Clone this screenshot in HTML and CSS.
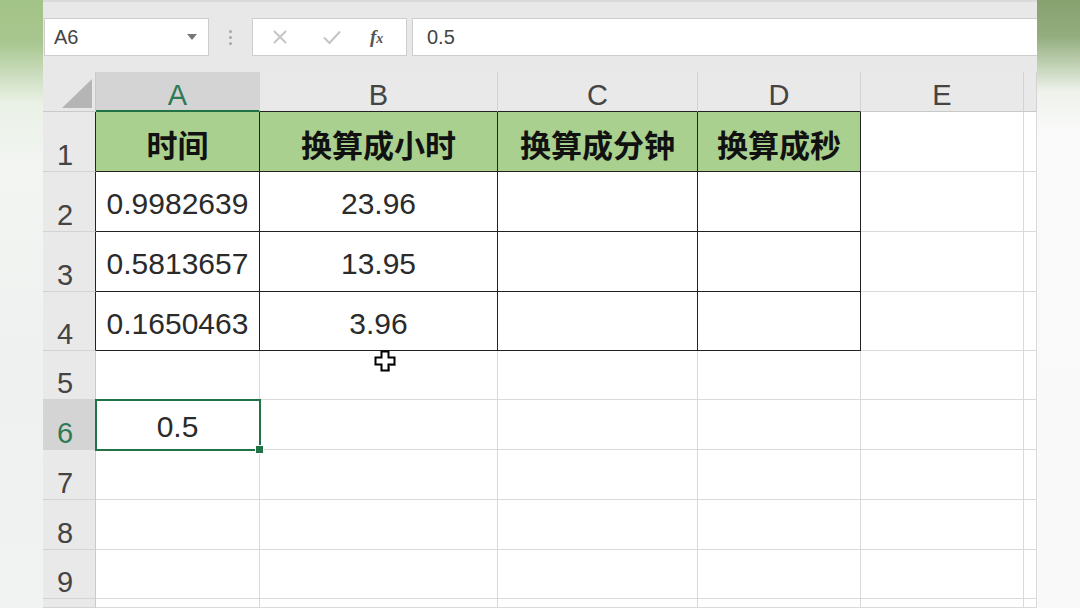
FILE: index.html
```html
<!DOCTYPE html>
<html lang="zh-CN">
<head>
    <meta charset="UTF-8">
    <meta name="viewport" content="width=device-width, initial-scale=1.0">
    <title>时间换算</title>
    <link rel="stylesheet" href="styles.css">
</head>
<body>
    <div class="frame">
        <div class="side side-left"></div>

        <div class="app">
            <div class="formula-bar">
                <div class="name-box">
                    <span>A6</span>
                    <span class="caret"></span>
                </div>
                <div class="grip">
                    <span></span><span></span><span></span>
                </div>
                <div class="fx-buttons">
                    <svg class="icon" width="16" height="16" viewBox="0 0 16 16">
                        <path d="M2 2 L14 14 M14 2 L2 14" stroke="#c4c4c4" stroke-width="1.8" fill="none"/>
                    </svg>
                    <svg class="icon" width="20" height="16" viewBox="0 0 20 16">
                        <path d="M2 8.5 L7.5 14 L18 2.5" stroke="#c4c4c4" stroke-width="2" fill="none"/>
                    </svg>
                    <span class="fx"><i>f</i><i class="x">x</i></span>
                </div>
                <div class="formula-input">0.5</div>
            </div>

            <div class="sheet">
                <!-- column headers -->
                <div class="corner">
                    <svg width="30" height="29" viewBox="0 0 30 29">
                        <polygon points="0,29 30,29 30,0" fill="#b5b5b5"/>
                    </svg>
                </div>
                <div class="col-head active">A</div>
                <div class="col-head dark">B</div>
                <div class="col-head dark">C</div>
                <div class="col-head dark">D</div>
                <div class="col-head">E</div>
                <div class="col-head"></div>

                <!-- row 1 -->
                <div class="row-head boxed">1</div>
                <div class="cell title boxed">时间</div>
                <div class="cell title boxed">换算成小时</div>
                <div class="cell title boxed">换算成分钟</div>
                <div class="cell title boxed">换算成秒</div>
                <div class="cell"></div>
                <div class="cell"></div>

                <!-- row 2 -->
                <div class="row-head boxed">2</div>
                <div class="cell num boxed">0.9982639</div>
                <div class="cell num boxed">23.96</div>
                <div class="cell boxed"></div>
                <div class="cell boxed"></div>
                <div class="cell"></div>
                <div class="cell"></div>

                <!-- row 3 -->
                <div class="row-head boxed">3</div>
                <div class="cell num boxed">0.5813657</div>
                <div class="cell num boxed">13.95</div>
                <div class="cell boxed"></div>
                <div class="cell boxed"></div>
                <div class="cell"></div>
                <div class="cell"></div>

                <!-- row 4 -->
                <div class="row-head boxed">4</div>
                <div class="cell num boxed">0.1650463</div>
                <div class="cell num boxed">3.96</div>
                <div class="cell boxed"></div>
                <div class="cell boxed"></div>
                <div class="cell"></div>
                <div class="cell"></div>

                <!-- row 5 -->
                <div class="row-head">5</div>
                <div class="cell"></div>
                <div class="cell"></div>
                <div class="cell"></div>
                <div class="cell"></div>
                <div class="cell"></div>
                <div class="cell"></div>

                <!-- row 6 -->
                <div class="row-head active">6</div>
                <div class="cell num selected">0.5</div>
                <div class="cell"></div>
                <div class="cell"></div>
                <div class="cell"></div>
                <div class="cell"></div>
                <div class="cell"></div>

                <!-- row 7 -->
                <div class="row-head">7</div>
                <div class="cell"></div>
                <div class="cell"></div>
                <div class="cell"></div>
                <div class="cell"></div>
                <div class="cell"></div>
                <div class="cell"></div>

                <!-- row 8 -->
                <div class="row-head">8</div>
                <div class="cell"></div>
                <div class="cell"></div>
                <div class="cell"></div>
                <div class="cell"></div>
                <div class="cell"></div>
                <div class="cell"></div>

                <!-- row 9 -->
                <div class="row-head">9</div>
                <div class="cell"></div>
                <div class="cell"></div>
                <div class="cell"></div>
                <div class="cell"></div>
                <div class="cell"></div>
                <div class="cell"></div>

                <!-- row 10 (cut off) -->
                <div class="row-head"></div>
                <div class="cell"></div>
                <div class="cell"></div>
                <div class="cell"></div>
                <div class="cell"></div>
                <div class="cell"></div>
                <div class="cell"></div>
            </div>
        </div>

        <div class="side side-right"></div>

        <!-- mouse pointer -->
        <svg class="pointer" width="24" height="24" viewBox="0 0 24 24">
            <path d="M8.5 2.5 H15.5 V8.5 H21.5 V15.5 H15.5 V21.5 H8.5 V15.5 H2.5 V8.5 H8.5 Z"
                  fill="#fff" stroke="#000" stroke-width="2"/>
            <path d="M16.5 22.5 V16.5 H22.5" stroke="#555" stroke-width="1" fill="none"/>
        </svg>
    </div>
</body>
</html>
```

FILE: styles.css
```css
* {
    box-sizing: border-box;
}

body {
    margin: 0;
    background-color: #fff;
    font-family: "Liberation Sans", Arial, "Noto Sans CJK SC", sans-serif;
}

.frame {
    position: relative;
    display: flex;
    width: 1080px;
    height: 608px;
    overflow: hidden;
}

.side {
    width: 43px;
    flex-shrink: 0;
}

.side-left {
    background: linear-gradient(to bottom, #a2c387 0%, #a8c790 7%, #cadcbc 12%, #eaf1e6 17%, #f3f5f3 28%, #eef1ef 60%, #f1f3f2 100%);
}

.side-right {
    background: linear-gradient(to bottom, #87a26f 0%, #93ad7e 6%, #c4d4b8 11%, #eef2ea 15%, #fafafa 22%, #f9f9f9 100%);
}

.app {
    width: 994px;
    flex-shrink: 0;
    display: flex;
    flex-direction: column;
    background-color: #e8e8e8;
}

/* formula bar */
.formula-bar {
    height: 72px;
    display: flex;
    align-items: flex-start;
    padding-top: 16px;
    border-top: 2px solid #d9d9d9;
    background-color: #e8e8e8;
    color: #444;
    font-size: 20px;
}

.name-box {
    width: 165px;
    height: 38px;
    margin-left: 1px;
    display: flex;
    align-items: center;
    justify-content: space-between;
    padding: 0 9px 0 9px;
    background-color: #fff;
    border: 1px solid #cdcdcd;
}

.caret {
    width: 0;
    height: 0;
    border-left: 5px solid transparent;
    border-right: 5px solid transparent;
    border-top: 6px solid #777;
    margin-right: 2px;
}

.grip {
    width: 43px;
    height: 38px;
    display: flex;
    flex-direction: column;
    align-items: center;
    justify-content: center;
    gap: 3px;
}

.grip span {
    width: 3px;
    height: 3px;
    border-radius: 50%;
    background-color: #a8a8a8;
}

.fx-buttons {
    width: 155px;
    height: 38px;
    display: flex;
    align-items: center;
    padding-left: 19px;
    gap: 34px;
    background-color: #fff;
    border: 1px solid #cdcdcd;
}

.fx {
    font-family: "Liberation Serif", "Times New Roman", serif;
    font-style: italic;
    font-weight: bold;
    font-size: 19px;
    color: #555;
    margin-left: -6px;
}

.fx .x {
    font-size: 14px;
}

.formula-input {
    flex: 1;
    height: 38px;
    margin-left: 5px;
    margin-right: -2px;
    display: flex;
    align-items: center;
    padding-left: 14px;
    background-color: #fff;
    border: 1px solid #cdcdcd;
}

/* grid */
.sheet {
    flex: 1;
    display: grid;
    grid-template-columns: 53px 164px 238px 200px 163px 163px 13px;
    grid-template-rows: 40px 60px 60px 60px 59px 49px 50px 50px 50px 49px 1fr;
    background-color: #fff;
}

.corner {
    display: flex;
    justify-content: flex-end;
    align-items: flex-end;
    padding: 0 3px 3px 0;
    background-color: #e8e8e8;
    border-right: 1px solid #c9c9c9;
    border-bottom: 1px solid #c9c9c9;
}

.col-head {
    display: flex;
    justify-content: center;
    align-items: flex-end;
    padding-bottom: 1px;
    background-color: #e9e9e9;
    border-right: 1px solid #d3d3d3;
    border-bottom: 1px solid #c9c9c9;
    font-size: 29px;
    line-height: 1;
    color: #444;
}

.col-head.dark {
    border-bottom-color: #222;
}

.col-head.active {
    background-color: #d4d4d4;
    border-bottom: 2px solid #217346;
    padding-bottom: 0;
    color: #2f7a56;
}

.row-head {
    display: flex;
    justify-content: center;
    align-items: flex-end;
    padding: 0 8px 1px 0;
    background-color: #e9e9e9;
    border-right: 1px solid #c9c9c9;
    border-bottom: 1px solid #d3d3d3;
    font-size: 29px;
    line-height: 1;
    color: #444;
}

.row-head.boxed {
    border-right-color: #222;
}

.row-head.active {
    background-color: #d4d4d4;
    color: #2f7a56;
}

.cell {
    display: flex;
    justify-content: center;
    align-items: center;
    border-right: 1px solid #dadada;
    border-bottom: 1px solid #dadada;
    color: #2b2b2b;
}

.cell.boxed {
    border-right-color: #222;
    border-bottom-color: #222;
}

.cell.title {
    background-color: #a9d08e;
    padding-top: 3px;
    font-family: "Noto Sans CJK SC", sans-serif;
    font-weight: bold;
    font-size: 31px;
    color: #111;
}

.cell.num {
    padding-top: 5px;
    font-size: 30px;
}

.cell.selected {
    position: relative;
    outline: 2px solid #217346;
    outline-offset: -1px;
    z-index: 1;
}

.cell.selected::after {
    content: "";
    position: absolute;
    right: -5px;
    bottom: -5px;
    width: 7px;
    height: 7px;
    background-color: #217346;
    border: 1px solid #fff;
}

.pointer {
    position: absolute;
    left: 373px;
    top: 349px;
}
```
